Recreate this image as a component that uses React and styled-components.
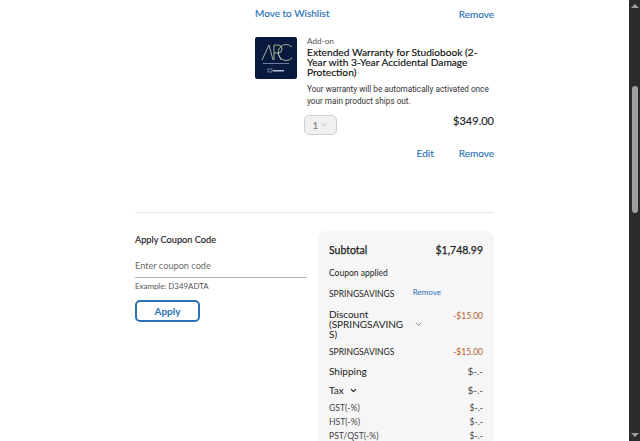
import React from 'react';
import styled, { createGlobalStyle } from 'styled-components';
import { ChevronDown } from 'lucide-react';

const GlobalStyle = createGlobalStyle`
	html, body {
		margin: 0;
		padding: 0;
		background: #fff;
		overflow: hidden;
	}
	* {
		box-sizing: border-box;
	}
`;

const Page = styled.div`
	display: flex;
	width: 640px;
	height: 441px;
	overflow: hidden;
	font-family: Lato, 'Noto Sans', sans-serif;
	color: #1c1c1c;
`;

const Main = styled.main`
	flex: 1;
	padding-left: 135px;
	overflow: hidden;
`;

const Column = styled.div`
	width: 359px;
`;

const CartItem = styled.section`
	padding: 6px 0 0 120px;
	height: 212px;
`;

const LinkRow = styled.div`
	display: flex;
	justify-content: ${(props) => props.end ? 'flex-end' : 'space-between'};
	gap: 25px;
	margin-top: ${(props) => props.top || 0}px;
`;

const TextLink = styled.a`
	color: #2a72b5;
	font-size: 10px;
	line-height: 14px;
	-webkit-text-stroke: 0.15px #2a72b5;
	position: relative;
	top: ${(props) => props.shift || 0}px;
`;

const AddOn = styled.div`
	display: grid;
	grid-template-columns: 42px 1fr;
	column-gap: 10px;
	margin-top: 17px;
`;

const Thumb = styled.div`
	width: 42px;
	height: 42px;
	border-radius: 2px;
	background: #0a1a3f;
`;

const Kicker = styled.div`
	margin-top: -1px;
	font-size: 8.2px;
	line-height: 10px;
	color: #555;
`;

const Title = styled.h3`
	margin: 1px 0 0;
	font-size: 10.2px;
	line-height: 10px;
	font-weight: 400;
	color: #111;
	-webkit-text-stroke: 0.15px #111;
`;

const Note = styled.p`
	margin: 6px 0 0;
	font-family: Roboto, sans-serif;
	font-size: 8.2px;
	line-height: 12px;
	color: #333;
`;

const PriceRow = styled.div`
	display: flex;
	justify-content: space-between;
	margin: 8px 0 0 -3px;
`;

const QtySelect = styled.div`
	width: 33px;
	height: 20px;
	border: 1px solid #cfcfcf;
	border-radius: 5px;
	background: #f0f0f0;
	color: #777;
	font-size: 10px;
	display: flex;
	align-items: center;
	justify-content: center;
	gap: 2px;
`;

const Price = styled.div`
	font-size: 11px;
	line-height: 12px;
	-webkit-text-stroke: 0.15px #1c1c1c;
`;

const Divider = styled.hr`
	margin: 0;
	border: 0;
	border-top: 1px solid #e6e6e6;
`;

const Bottom = styled.section`
	display: grid;
	grid-template-columns: 172px 176px;
	column-gap: 11px;
	padding-top: 18px;
`;

const Coupon = styled.div`
	padding-top: 3px;
`;

const CouponLabel = styled.div`
	font-size: 9.2px;
	line-height: 12px;
	color: #222;
	-webkit-text-stroke: 0.15px #222;
`;

const CouponInput = styled.div`
	margin-top: 13px;
	height: 19px;
	border-bottom: 1px solid #b5b5b5;
	font-size: 9.2px;
	line-height: 13px;
	color: #6b6b6b;
`;

const Hint = styled.div`
	margin-top: 3px;
	font-size: 7.9px;
	line-height: 11px;
	color: #555;
`;

const ApplyButton = styled.button`
	display: block;
	width: 65px;
	height: 22px;
	margin-top: 8px;
	padding: 0;
	background: #fff;
	border: 2px solid #2a72b5;
	border-radius: 5px;
	color: #2a72b5;
	font-family: inherit;
	font-size: 10px;
	font-weight: 700;
`;

const Summary = styled.aside`
	background: #f6f6f6;
	border-radius: 8px 8px 0 0;
	padding: 12px 11px 0;
	height: 300px;
`;

const Row = styled.div`
	display: flex;
	justify-content: space-between;
	align-items: ${(props) => props.top ? 'flex-start' : 'center'};
	height: ${(props) => props.h}px;
	padding-top: ${(props) => props.pad || 0}px;
	font-size: ${(props) => props.size || 10}px;
	-webkit-text-stroke: ${(props) => props.heavy ? '0.25px #1c1c1c' : '0'};
`;

const Label = styled.span`
	display: flex;
	align-items: center;
	gap: 5px;
`;

const Muted = styled.span`
	color: #444;
`;

const Negative = styled.span`
	color: #b5622e;
	font-size: 8.5px;
	line-height: 14px;
`;

const InlineRemove = styled.a`
	color: #2a72b5;
	font-size: 8px;
	margin-right: 42px;
	position: relative;
	top: -2px;
`;

const DiscountName = styled.div`
	width: 79px;
	font-size: 10px;
	line-height: 10px;
	color: #1c1c1c;
	overflow-wrap: anywhere;
`;

const DiscountLabel = styled.div`
	display: flex;
	align-items: center;
	gap: 6px;
	color: #666;
`;

const TaxRows = styled.div`
	padding-top: 4px;
`;

const Scrollbar = styled.div`
	width: 11px;
	height: 441px;
	background: #2b2b2b;
	display: flex;
	flex-direction: column;
	align-items: center;
	padding: 4px 0;
`;

const Arrow = styled.div`
	width: 0;
	height: 0;
	border-left: 4px solid transparent;
	border-right: 4px solid transparent;
	border-${(props) => props.down ? 'top' : 'bottom'}: 4px solid #9e9e9e;
`;

const Track = styled.div`
	flex: 1;
	width: 100%;
	padding-top: 78px;
	display: flex;
	justify-content: center;
`;

const Thumbbar = styled.div`
	width: 6px;
	height: 127px;
	border-radius: 3px;
	background: #9f9f9f;
`;

function ArcLogo() {
	return (
		<svg width="42" height="42" viewBox="0 0 42 42">
			<path d="M7 23 L14 8 L18 23" fill="none" stroke="#c6d8a8" strokeWidth="0.8" />
			<path d="M19 23 V8 H23 a4 4 0 0 1 0 8 H19 M23 16 L26 23" fill="none" stroke="#c6d8a8" strokeWidth="0.8" />
			<path d="M37 10 a8 8 0 1 0 0 11" fill="none" stroke="#c6d8a8" strokeWidth="0.8" />
			<rect x="8" y="26" width="26" height="1" fill="#6f7fa3" />
			<rect x="13" y="32" width="4" height="3" fill="none" stroke="#cfd8ea" strokeWidth="0.5" />
			<rect x="18" y="33" width="11" height="1.5" fill="#b8c4de" />
		</svg>
	);
}

export default function App() {
	return (
		<Page>
			<GlobalStyle />
			<Main>
				<Column>
					<CartItem>
						<LinkRow>
							<TextLink>Move to Wishlist</TextLink>
							<TextLink shift={1}>Remove</TextLink>
						</LinkRow>
						<AddOn>
							<Thumb><ArcLogo /></Thumb>
							<div>
								<Kicker>Add-on</Kicker>
								<Title>Extended Warranty for Studiobook (2-Year with 3-Year Accidental Damage Protection)</Title>
								<Note>Your warranty will be automatically activated once your main product ships out.</Note>
								<PriceRow>
									<QtySelect>1 <ChevronDown size={8} color="#aaa" /></QtySelect>
									<Price>$349.00</Price>
								</PriceRow>
							</div>
						</AddOn>
						<LinkRow end top={11}>
							<TextLink>Edit</TextLink>
							<TextLink>Remove</TextLink>
						</LinkRow>
					</CartItem>
					<Divider />
					<Bottom>
						<Coupon>
							<CouponLabel>Apply Coupon Code</CouponLabel>
							<CouponInput>Enter coupon code</CouponInput>
							<Hint>Example: D349ADTA</Hint>
							<ApplyButton>Apply</ApplyButton>
						</Coupon>
						<Summary>
							<Row h={14} size={10.5} heavy>
								<span>Subtotal</span>
								<span>$1,748.99</span>
							</Row>
							<Row h={31} size={8.5}>Coupon applied</Row>
							<Row h={12} size={8.5}>
								<span>SPRINGSAVINGS</span>
								<InlineRemove>Remove</InlineRemove>
							</Row>
							<Row h={45} pad={9} top>
								<DiscountLabel>
									<DiscountName>Discount (SPRINGSAVINGS)</DiscountName>
									<ChevronDown size={9} />
								</DiscountLabel>
								<Negative>-$15.00</Negative>
							</Row>
							<Row h={14} size={8.5}>
								<span>SPRINGSAVINGS</span>
								<Negative>-$15.00</Negative>
							</Row>
							<Row h={24}>
								<span>Shipping</span>
								<Muted>$-.-</Muted>
							</Row>
							<Row h={14}>
								<Label>Tax <ChevronDown size={9} strokeWidth={3} /></Label>
								<Muted>$-.-</Muted>
							</Row>
							<TaxRows>
								<Row h={14} size={8.6}><Muted>GST(-%)</Muted><Muted>$-.-</Muted></Row>
								<Row h={14} size={8.6}><Muted>HST(-%)</Muted><Muted>$-.-</Muted></Row>
								<Row h={14} size={8.6}><Muted>PST/QST(-%)</Muted><Muted>$-.-</Muted></Row>
							</TaxRows>
						</Summary>
					</Bottom>
				</Column>
			</Main>
			<Scrollbar>
				<Arrow />
				<Track><Thumbbar /></Track>
				<Arrow down />
			</Scrollbar>
		</Page>
	);
}
